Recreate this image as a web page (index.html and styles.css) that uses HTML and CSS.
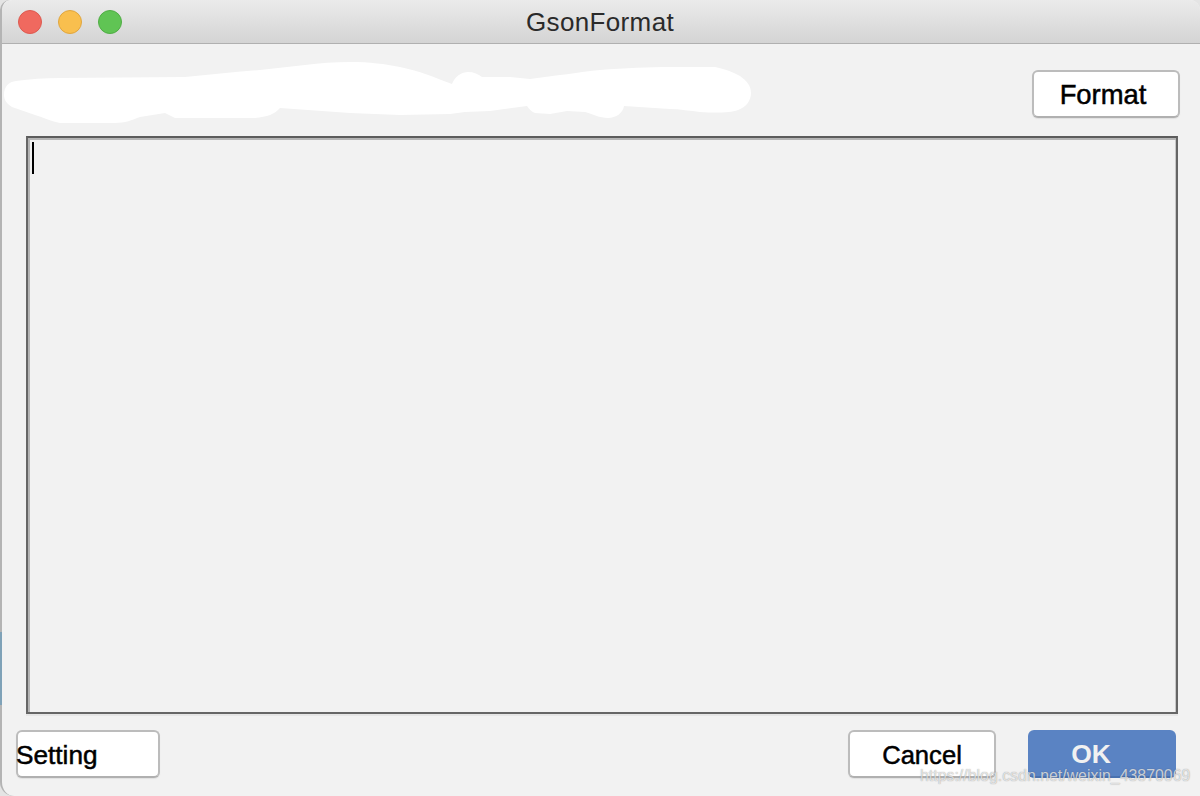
FILE: index.html
```html
<!DOCTYPE html>
<html lang="en">
<head>
<meta charset="utf-8">
<title>GsonFormat</title>
<link rel="stylesheet" href="styles.css">
</head>
<body>
<div class="window">
  <span class="edge"></span>
  <header class="titlebar">
    <div class="lights">
      <span class="light red"></span>
      <span class="light yellow"></span>
      <span class="light green"></span>
    </div>
    <h1 class="title">GsonFormat</h1>
  </header>
  <main class="content">
    <div class="toprow">
      <svg class="scribble" viewBox="0 0 760 80" width="760" height="80" aria-hidden="true">
        <path fill="#fff" d="M4 31 C4 22 9 18 16 17 C30 15 45 14 60 14 L185 13 C210 11 235 8 260 6 C290 3 320 -2 350 -2 C370 -2 385 0 400 3 C420 7 436 14 452 20 C455 12 462 8 468 8 C474 8 478 10 482 13 L510 13 L530 15 C555 12 580 8 600 6 C625 4 650 3 670 3 L715 3 C725 5 733 8 740 12 C747 17 751 22 751 29 C751 37 746 43 738 46 C730 49 715 49 700 48 C690 47 680 45 670 45 L624 42 C623 49 616 54 608 54 C600 54 592 50 585 48 L567 47 L550 50 L535 49 C532 48 529 45 527 42 L490 47 L465 48 L450 50 L400 51 L350 49 L280 44 C275 50 267 53 255 54 L175 54 L165 49 L140 53 C132 56 125 59 115 59 L60 59 C50 57 42 53 35 51 L12 43 C7 40 4 36 4 31 Z"/>
      </svg>
      <button class="btn format">Format</button>
    </div>
    <div class="editor"><span class="caret"></span></div>
    <div class="bottomrow">
      <button class="btn setting">Setting</button>
      <div class="actions">
        <button class="btn cancel">Cancel</button>
        <button class="btn ok">OK</button>
      </div>
    </div>
  </main>
  <span class="watermark">https://blog.csdn.net/weixin_43870069</span>
</div>
</body>
</html>
```
FILE: styles.css
```css
* { box-sizing: border-box; }
html, body { margin: 0; padding: 0; }
body {
  width: 1200px;
  height: 796px;
  overflow: hidden;
  background: #e4e4e4;
  font-family: "Liberation Sans", Arial, sans-serif;
}
.window {
  position: relative;
  width: 1200px;
  height: 796px;
  background: #f2f2f2;
  border-left: 2px solid #b4b4b4;
  border-radius: 10px 10px 0 14px;
  display: flex;
  flex-direction: column;
}
.edge {
  position: absolute;
  left: -2px;
  top: 632px;
  width: 2px;
  height: 73px;
  background: #7fa2b8;
}
.titlebar {
  height: 44px;
  flex: none;
  position: relative;
  display: flex;
  align-items: center;
  justify-content: center;
  background: linear-gradient(#ebebeb, #d4d4d4);
  border-bottom: 1px solid #b0b0b0;
  border-radius: 10px 10px 0 0;
}
.lights {
  position: absolute;
  left: 16px;
  top: 10px;
  display: flex;
  gap: 16px;
}
.light {
  width: 24px;
  height: 24px;
  border-radius: 50%;
  border: 1px solid;
}
.red { background: #f0695f; border-color: #dd5a50; }
.yellow { background: #f9bf4e; border-color: #e0a63f; }
.green { background: #60c454; border-color: #50ad45; }
.title {
  margin: 2px 0 0 -2px;
  font-size: 26px;
  font-weight: 400;
  letter-spacing: 0.36px;
  color: #2a2a2a;
}
.content {
  flex: 1;
  display: flex;
  flex-direction: column;
  padding: 0 22px 18px 14px;
}
.toprow {
  height: 92px;
  flex: none;
  position: relative;
  display: flex;
  justify-content: flex-end;
  padding-top: 26px;
  margin-right: -2px;
}
.scribble {
  position: absolute;
  left: -16px;
  top: 20px;
  overflow: visible;
}
.btn {
  height: 48px;
  background: #fff;
  border: 2px solid #bcbcbc;
  border-bottom-color: #b0b0b0;
  border-radius: 6px;
  box-shadow: 0 1px 1px #e0e0e0;
  font-family: "Liberation Sans", Arial, sans-serif;
  font-size: 26.5px;
  color: #000;
  padding: 2px 0 0;
  -webkit-text-stroke: 0.5px #000;
}
.format {
  width: 148px;
  font-size: 27.4px;
  padding-right: 6px;
}
.editor {
  height: 578px;
  flex: none;
  margin: 0 0 0 10px;
  width: 1152px;
  padding: 4px;
  background: #f2f2f2;
  border: 2px solid #666;
  border-top-color: #5c5c5c;
  box-shadow: inset 2px 2px 0 #b4b4b4, inset -1px 0 0 #c8c8c8, 0 2px 0 #e6e6e6;
}
.caret {
  display: block;
  width: 2px;
  height: 32px;
  background: #000;
}
.bottomrow {
  display: flex;
  justify-content: space-between;
  margin-top: 16px;
  margin-right: 2px;
}
.setting {
  width: 144px;
  text-align: left;
  text-indent: -2px;
  font-size: 26.2px;
}
.actions {
  display: flex;
  gap: 32px;
}
.cancel {
  width: 148px;
  font-size: 25.6px;
}
.ok {
  width: 148px;
  background: #5a83c3;
  border: 0;
  border-bottom: 2px solid #4a72b0;
  box-shadow: none;
  color: #f1f1f1;
  font-weight: 700;
  -webkit-text-stroke: 0;
  padding: 2px 22px 0 0;
}
.watermark {
  position: absolute;
  left: 918px;
  top: 767px;
  font-size: 15.9px;
  color: rgba(255, 255, 255, 0.7);
  text-shadow: 0 0 1px rgba(70, 70, 70, 0.6);
  white-space: nowrap;
}
```
